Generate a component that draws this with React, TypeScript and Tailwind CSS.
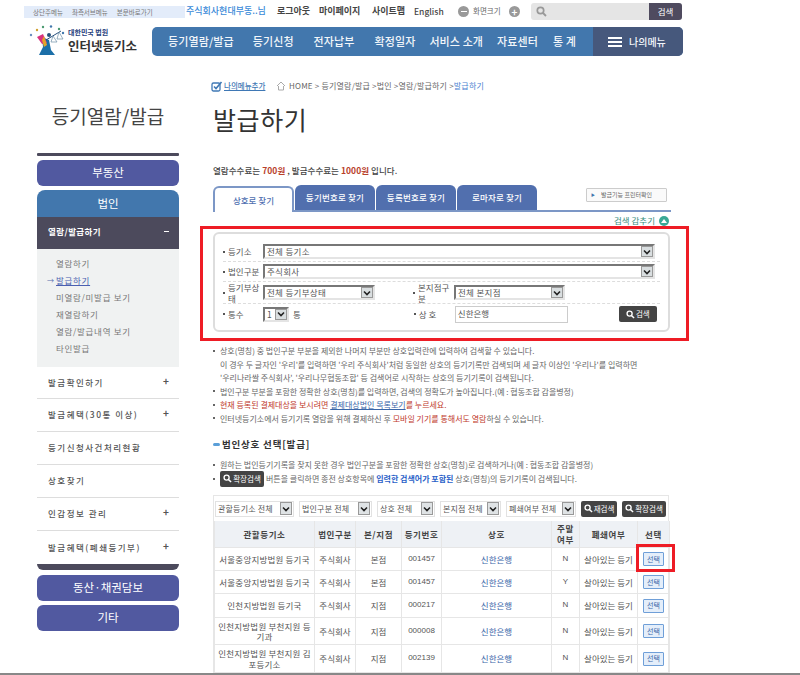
import React from "react";

const font = { fontFamily: '"Noto Sans CJK KR", "Noto Sans", sans-serif' };

function Sel({ text, w, h = "h-[15px]" }: { text: string; w: string; h?: string }) {
  return (
    <div className={`${w} ${h} flex items-center border-2 border-t-[#777] border-l-[#777] border-r-[#e4e4e4] border-b-[#e4e4e4] bg-white shrink-0`}>
      <span className="flex-1 pl-[2px] text-[8.5px] leading-[11px] text-[#555] tracking-[0.3px] whitespace-nowrap">{text}</span>
      <span className="w-[12px] h-full flex items-center justify-center bg-[#d9dee0] border border-[#999] shrink-0">
        <svg width="8" height="6" viewBox="0 0 8 6"><path d="M1 1.5 L4 4.5 L7 1.5" fill="none" stroke="#222" strokeWidth="1.6" /></svg>
      </span>
    </div>
  );
}

function FSel({ text, w }: { text: string; w: string }) {
  return (
    <div className={`${w} h-[16px] flex items-center border border-[#e2e2e2] bg-white shrink-0 pr-[1px]`}>
      <span className="flex-1 pl-[2px] text-[8px] leading-[11px] text-[#555] tracking-[0.2px] whitespace-nowrap">{text}</span>
      <span className="w-[12px] h-[13px] flex items-center justify-center bg-[#dfe3e5] border border-[#999] shrink-0">
        <svg width="8" height="6" viewBox="0 0 8 6"><path d="M1 1.5 L4 4.5 L7 1.5" fill="none" stroke="#222" strokeWidth="1.6" /></svg>
      </span>
    </div>
  );
}

function DarkBtn({ text, w, h = "h-[16px]" }: { text: string; w: string; h?: string }) {
  return (
    <span className={`${w} ${h} flex items-center justify-center gap-[1px] rounded-[2px] bg-[#444] text-white text-[7.5px] leading-none shrink-0`}>
      <svg width="9" height="9" viewBox="0 0 10 10"><circle cx="4" cy="4" r="2.8" fill="none" stroke="#fff" strokeWidth="1.5" /><path d="M6 6 L9 9" stroke="#fff" strokeWidth="1.6" /></svg>
      {text}
    </span>
  );
}

function Logo() {
  return (
    <svg width="44" height="34" viewBox="0 0 44 34" className="shrink-0">
      {[[2, 12, "#6a8fc0"], [8, 7, "#d0a030"], [14, 4, "#4a9a70"], [22, 3.5, "#4277ad"], [30, 6, "#4a9a70"], [34, 10, "#4277ad"]].map((d, i) => (
        <circle key={i} cx={d[0] as number} cy={d[1] as number} r="1.2" fill={d[2] as string} />
      ))}
      <path d="M13 14 L20 17 L22 27 L26 32 L10 32 L14 24 Z" fill="#1b6fa8" />
      <path d="M8 14 L14 11 L18 20 L13 21 Z" fill="#d9327f" />
      <path d="M13 17 L15 13 L18 22 L15 24 Z" fill="#e2a32b" />
      <circle cx="20" cy="12" r="2" fill="#27507d" />
      <path d="M17 17 L32 8" stroke="#27507d" strokeWidth="1" />
      <path d="M24 13 L22 19 L28 19 Z M30 9 L28 16 L34 16 Z" fill="none" stroke="#6f8fa8" strokeWidth="0.7" />
    </svg>
  );
}

function SideRow({ text, plus, h, last }: { text: string; plus?: boolean; h: string; last?: boolean }) {
  return (
    <div className={`${h} flex items-center justify-between pl-[11px] pr-[10px] pb-[1px] ${last ? "" : "border-b border-[#ddd]"}`}>
      <span className="text-[8.5px] font-medium text-[#555] tracking-[1.5px] whitespace-nowrap">{text}</span>
      {plus && <span className="text-[10px] font-bold text-[#555] leading-none -mt-[3px]">+</span>}
    </div>
  );
}

function Note({ children, bullet = true }: { children: React.ReactNode; bullet?: boolean }) {
  return (
    <div className="flex h-[13.5px] items-center text-[8px] leading-[11px] text-[#666] whitespace-nowrap">
      <span className="w-[7px] shrink-0">{bullet && <span className="block w-[2px] h-[2px] bg-[#666]" />}</span>
      <span>{children}</span>
    </div>
  );
}

const rows = [
  ["서울중앙지방법원 등기국", "주식회사", "본점", "001457", "N", "h-[23px]"],
  ["서울중앙지방법원 등기국", "주식회사", "본점", "001457", "Y", "h-[23px]"],
  ["인천지방법원 등기국", "주식회사", "지점", "000217", "N", "h-[24px]"],
  ["인천지방법원 부천지원 등기과", "주식회사", "지점", "000008", "N", "h-[27px]"],
  ["인천지방법원 부천지원 김포등기소", "주식회사", "지점", "002139", "N", "h-[28px]"],
];

export default function App() {
  return (
    <div style={font} className="relative w-[800px] h-[675px] overflow-hidden bg-white">
      {/* utility bar */}
      <div className="flex h-[27px] items-start pl-[24px] pt-[3px]">
        <div className="mt-[3px] flex h-[12px] w-[161px] items-center gap-[9px] bg-[#e3ecfa] pl-[9px] text-[6.5px] leading-none text-[#777]">
          <span>상단주메뉴</span><span>좌측서브메뉴</span><span>본문바로가기</span>
        </div>
        <span className="ml-[1px] mt-[1px] w-[91px] text-[9px] font-medium leading-[14px] text-[#3a8ad8] whitespace-nowrap">주식회사현대부동..님</span>
        <div className="mt-[1px] flex text-[9px] font-bold leading-[14px] text-[#444] whitespace-nowrap">
          <span className="w-[42px]">로그아웃</span>
          <span className="w-[53px]">마이페이지</span>
          <span className="w-[42px]">사이트맵</span>
        </div>
        <span className="mt-[1px] w-[44px] text-[8.5px] font-medium leading-[14px] text-[#444]">English</span>
        <span className="mt-[3px] flex h-[11px] w-[11px] items-center justify-center rounded-full bg-[#999]"><span className="h-[1.5px] w-[6px] bg-white" /></span>
        <span className="ml-[4px] mt-[1px] w-[36px] text-[7.5px] leading-[14px] text-[#666] whitespace-nowrap">화면크기</span>
        <span className="relative mt-[3px] flex h-[11px] w-[11px] items-center justify-center rounded-full bg-[#999] text-[10px] font-bold leading-none text-white">+</span>
        <div className="ml-[11px] flex h-[17px] w-[151px] items-stretch overflow-hidden rounded-[3px] bg-[#e5e5e5]">
          <span className="flex flex-1 items-center pl-[5px]">
            <svg width="11" height="11" viewBox="0 0 11 11"><circle cx="4.5" cy="4.5" r="3.2" fill="none" stroke="#999" strokeWidth="1.7" /><path d="M7 7 L10 10" stroke="#999" strokeWidth="1.8" /></svg>
          </span>
          <span className="flex w-[33px] items-center justify-center bg-[#4f4b5f] text-[8.5px] leading-none text-white">검색</span>
        </div>
      </div>

      {/* logo + nav */}
      <div className="flex h-[29px] pl-[29px]">
        <div className="flex h-[36px] w-[123px] -mt-[5px] items-center">
          <Logo />
          <div className="-ml-[5px] flex flex-col gap-[1px]">
            <span className="text-[7px] font-bold leading-[9px] text-[#27407c] whitespace-nowrap">대한민국 법원</span>
            <span className="text-[12.5px] font-bold leading-[15px] text-[#333] whitespace-nowrap">인터넷등기소</span>
          </div>
        </div>
        <div className="flex h-[29px] w-[531px] overflow-hidden rounded-[5px] bg-[#4277ad] text-[11px] font-medium leading-none text-[#f2f6fa] whitespace-nowrap">
          <div className="flex flex-1 items-center pl-[16px] tracking-[0.1px]">
            <span>등기열람/발급</span>
            <span className="ml-[19px]">등기신청</span>
            <span className="ml-[20px]">전자납부</span>
            <span className="ml-[20px]">확정일자</span>
            <span className="ml-[14px]">서비스 소개</span>
            <span className="ml-[14px]">자료센터</span>
            <span className="ml-[15px]">통 계</span>
          </div>
          <div className="flex w-[90px] items-center gap-[7px] bg-[#46587c] pl-[15px] text-[10px]">
            <span className="flex flex-col gap-[2px]"><i className="block h-[2px] w-[14px] bg-white" /><i className="block h-[2px] w-[14px] bg-white" /><i className="block h-[2px] w-[14px] bg-white" /></span>
            나의메뉴
          </div>
        </div>
      </div>

      {/* body */}
      <div className="flex pl-[37px]">
        {/* sidebar */}
        <aside className="w-[142px] shrink-0 pt-[47px]">
          <h2 className="h-[50px] text-center text-[19px] leading-[26px] font-normal text-[#444] whitespace-nowrap">등기열람/발급</h2>
          <div className="h-[3px] rounded-[1px] bg-[#4c4a5c]" />
          <div className="mt-[4px] flex h-[26px] items-center justify-center rounded-[6px] bg-[#5159a0] text-[11.5px] text-white">부동산</div>
          <div className="mt-[4px] flex h-[27px] items-center justify-center rounded-t-[8px] bg-[#4277ad] text-[11.5px] text-white">법인</div>
          <div className="flex h-[32px] items-center justify-between bg-[#4c4a5c] pb-[3px] pl-[11px] pr-[10px] text-[8.5px] font-bold tracking-[0.4px] text-white">
            <span>열람/발급하기</span><span className="block h-[1.5px] w-[5px] bg-white" />
          </div>
          <div className="flex h-[118px] flex-col bg-[#f0f2f2] pl-[19px] pt-[6px] text-[8.5px] leading-[16.9px] text-[#777] tracking-[0.7px] whitespace-nowrap">
            <span>열람하기</span>
            <span className="relative text-[#4a5fb0] underline"><span className="absolute -left-[9px] top-0 no-underline text-[#5a6fb0] text-[7px]">→</span>발급하기</span>
            <span>미열람/미발급 보기</span>
            <span>재열람하기</span>
            <span>열람/발급내역 보기</span>
            <span>타인발급</span>
          </div>
          <SideRow text="발급확인하기" plus h="h-[32px]" />
          <SideRow text="발급혜택(30통 이상)" plus h="h-[33px]" />
          <SideRow text="등기신청사건처리현황" h="h-[33px]" />
          <SideRow text="상호찾기" h="h-[33px]" />
          <SideRow text="인감정보 관리" plus h="h-[33px]" />
          <SideRow text="발급혜택(폐쇄등기부)" plus h="h-[33px]" last />
          <div className="h-[6px] rounded-b-[6px] bg-[#4c4a5c]" />
          <div className="mt-[5px] flex h-[26px] items-center justify-center rounded-[6px] bg-[#5159a0] text-[11.5px] text-white">동산·채권담보</div>
          <div className="mt-[4px] flex h-[26px] items-center justify-center rounded-[6px] bg-[#5159a0] text-[11.5px] text-white">기타</div>
        </aside>

        {/* main */}
        <main className="ml-[34px] w-[457px] shrink-0">
          <div className="mt-[22px] flex h-[16px] items-center whitespace-nowrap text-[8px] leading-none tracking-[0.2px] text-[#666]">
            <svg width="12" height="11" viewBox="0 0 12 11" className="-ml-[2px]"><rect x="1" y="2" width="8" height="8" rx="1.5" fill="none" stroke="#3f78b5" strokeWidth="1.3" /><path d="M3 5.5 L5 7.5 L10.5 1" fill="none" stroke="#3f78b5" strokeWidth="1.6" /></svg>
            <span className="ml-[1px] w-[52px] text-[7.5px] font-medium tracking-normal text-[#3f78b5] underline">나의메뉴추가</span>
            <svg width="10" height="10" viewBox="0 0 10 10" className="mr-[3px]"><path d="M1 5 L5 1 L9 5 M2.5 5 V9 H7.5 V5" fill="none" stroke="#aaa" strokeWidth="1" /></svg>
            <span>HOME &gt; 등기열람/발급 &gt;법인 &gt;열람/발급하기 &gt;<span className="text-[#4a7fd0]">발급하기</span></span>
          </div>
          <h1 className="mt-[8px] h-[35px] text-[25px] leading-[35px] font-normal tracking-[0.6px] text-[#333]">발급하기</h1>
          <p className="mt-[26px] h-[14px] text-[8.5px] font-medium leading-[14px] tracking-[0.05px] text-[#444] whitespace-nowrap">
            열람수수료는 <span className="font-bold text-[#b8402a]">700원</span> , 발급수수료는 <span className="font-bold text-[#b8402a]">1000원</span> 입니다.
          </p>

          {/* tabs */}
          <div className="mt-[9px] -mr-[1px] flex h-[26px] items-end border-b-2 border-[#7c97c6]">
            <div className="-mb-[2px] flex h-[26px] w-[81px] items-center justify-center rounded-t-[6px] border-2 border-b-0 border-[#7c97c6] bg-white text-[8.5px] font-medium text-[#4f6fb0]">상호로 찾기</div>
            {["등기번호로 찾기", "등록번호로 찾기", "로마자로 찾기"].map((t) => (
              <div key={t} className="ml-[1px] flex h-[25px] w-[80px] items-center justify-center rounded-t-[6px] bg-[#516fae] text-[8.5px] font-medium tracking-[0.2px] text-white">{t}</div>
            ))}
            <div className="ml-[49px] mb-[8px] flex h-[14px] w-[81px] items-center rounded-[1px] border border-[#ccc] bg-[#fafafa] pl-[4px] text-[6px] leading-none text-[#666] whitespace-nowrap">
              <span className="mr-[6px] text-[4px] text-[#4277ad]">▶</span>발급기능 프린터확인
            </div>
          </div>
          <div className="flex h-[17px] items-center justify-end gap-[4px] pr-[1px] text-[8.5px] leading-none text-[#3a8f80]">
            검색 감추기
            <span className="flex h-[10px] w-[10px] items-center justify-center rounded-full bg-[#3aa895]"><svg width="6" height="4" viewBox="0 0 6 4"><path d="M0 4 L3 0 L6 4 Z" fill="#fff" /></svg></span>
          </div>

          {/* search panel */}
          <div className="relative mt-[3px] h-[100px] rounded-[6px] border-2 border-[#ddd] px-[8px] pt-[10px] text-[8.5px] leading-[11px] text-[#555]">
            <div className="flex h-[18px] items-start border-b border-dashed border-[#ddd]">
              <span className="flex w-[40px] items-center pt-[2px]"><i className="mr-[3px] block h-[2px] w-[2px] bg-[#555]" />등기소</span>
              <Sel text="전체 등기소" w="w-[392px]" />
            </div>
            <div className="flex h-[20px] items-center border-b border-dashed border-[#ddd]">
              <span className="flex w-[40px] items-center"><i className="mr-[3px] block h-[2px] w-[2px] bg-[#555]" />법인구분</span>
              <Sel text="주식회사" w="w-[392px]" />
            </div>
            <div className="flex h-[22px] items-center border-b border-dashed border-[#ddd]">
              <span className="flex w-[40px] items-center"><i className="mr-[3px] block h-[2px] w-[2px] shrink-0 bg-[#555]" /><span className="w-[33px] shrink-0 leading-[11px]">등기부상태</span></span>
              <Sel text="전체 등기부상태" w="w-[112px]" />
              <span className="ml-[38px] flex w-[41px] items-center"><i className="mr-[3px] block h-[2px] w-[2px] shrink-0 bg-[#555]" /><span className="w-[33px] shrink-0 leading-[11px]">본지점구분</span></span>
              <Sel text="전체 본지점" w="w-[111px]" />
            </div>
            <div className="flex h-[20px] items-center">
              <span className="flex w-[40px] items-center"><i className="mr-[3px] block h-[2px] w-[2px] bg-[#555]" />통수</span>
              <Sel text="1" w="w-[26px]" />
              <span className="ml-[4px]">통</span>
              <span className="ml-[113px] flex w-[41px] items-center"><i className="mr-[3px] block h-[2px] w-[2px] bg-[#555]" />상 호</span>
              <div className="h-[17px] w-[113px] border border-[#ccc] pl-[2px] pt-[1px] text-[8.5px] text-[#555]">신한은행</div>
              <span className="ml-[51px]"><DarkBtn text="검색" w="w-[38px]" /></span>
            </div>
            <div className="pointer-events-none absolute -left-[15px] -top-[8px] h-[115px] w-[489px] border-[3px] border-[#ee1c25]" />
          </div>

          {/* notes */}
          <div className="mt-[12px]">
            <Note>상호(명칭) 중 법인구분 부분을 제외한 나머지 부분만 상호입력란에 입력하여 검색할 수 있습니다.</Note>
            <Note bullet={false}>이 경우 두 글자인 '우리'를 입력하면 '우리 주식회사'처럼 동일한 상호의 등기기록만 검색되며 세 글자 이상인 '우리나'를 입력하면</Note>
            <Note bullet={false}>'우리나라쌀 주식회사', '우리나무협동조합' 등 검색어로 시작하는 상호의 등기기록이 검색됩니다.</Note>
            <Note>법인구분 부분을 포함한 정확한 상호(명칭)를 입력하면, 검색의 정확도가 높아집니다.(예 : 협동조합 감을병정)</Note>
            <Note><span className="text-[#c0392b]">현재 등록된 결제대상을 보시려면 <span className="text-[#3a66a8] underline">결제대상법인 목록보기</span>를 누르세요.</span></Note>
            <Note>인터넷등기소에서 등기기록 열람을 위해 결제하신 후 <span className="text-[#c0392b]">모바일 기기를 통해서도 열람</span>하실 수 있습니다.</Note>
          </div>

          <div className="mt-[12px] flex h-[14px] items-center gap-[2px] text-[9.5px] font-bold tracking-[0.8px] text-[#333] whitespace-nowrap">
            <span className="h-[3px] w-[7px] rounded-full bg-[#5a9fd8]" />법인상호 선택[발급]
          </div>

          <div className="mt-[7px]">
            <Note>원하는 법인등기기록을 찾지 못한 경우 법인구분을 포함한 정확한 상호(명칭)로 검색하거나(예 : 협동조합 감을병정)</Note>
            <div className="-mt-[1px] flex h-[16px] items-center whitespace-nowrap text-[8px] leading-[11px] text-[#666]">
              <span className="w-[7px] shrink-0"><span className="block h-[2px] w-[2px] bg-[#666]" /></span>
              <DarkBtn text="확장검색" w="w-[44px]" />
              <span className="ml-[2px]">버튼을 클릭하면 종전 상호항목에 <b className="font-bold text-[#2a5fc8]">입력한 검색어가 포함된</b> 상호(명칭)의 등기기록이 검색됩니다.</span>
            </div>
          </div>

          {/* table */}
          <div className="mt-[8px] w-[456px] border border-b-0 border-[#e6e6e6]">
            <div className="flex h-[25px] items-start gap-[5px] pl-[1px] pt-[5px]">
              <FSel text="관할등기소 전체" w="w-[79px]" />
              <FSel text="법인구분 전체" w="w-[73px]" />
              <FSel text="상호 전체" w="w-[58px]" />
              <FSel text="본지점 전체" w="w-[61px]" />
              <FSel text="폐쇄여부 전체" w="w-[70px]" />
              <DarkBtn text="재검색" w="w-[36px]" />
              <DarkBtn text="확장검색" w="w-[44px]" />
            </div>
            <table className="w-[455px] table-fixed border-collapse text-center text-[8.5px] leading-[10.5px] text-[#555]">
              <colgroup>
                <col className="w-[100px]" /><col className="w-[41px]" /><col className="w-[46px]" /><col className="w-[40px]" /><col className="w-[110px]" /><col className="w-[28px]" /><col className="w-[58px]" /><col className="w-[32px]" />
              </colgroup>
              <thead>
                <tr className="h-[27px] bg-[#eef1f5] font-bold text-[#444]">
                  {["관할등기소", "법인구분", "본/지점", "등기번호", "상호", "주말여부", "폐쇄여부", "선택"].map((t, i) => (
                    <th key={t} className={`border border-[#e6e6e6] border-t-0 font-bold tracking-[0.6px] ${i === 5 ? "px-[4px]" : "p-0"}`}>{t}</th>
                  ))}
                </tr>
              </thead>
              <tbody>
                {rows.map((r, i) => (
                  <tr key={i} className={r[5]}>
                    <td className="border border-[#e6e6e6] px-[1px] py-0 tracking-[0.2px]">{r[0]}</td>
                    <td className="border border-[#e6e6e6] p-0">{r[1]}</td>
                    <td className="border border-[#e6e6e6] p-0">{r[2]}</td>
                    <td className="border border-[#e6e6e6] p-0 font-['Liberation_Sans'] text-[8px]">{r[3]}</td>
                    <td className="border border-[#e6e6e6] p-0 text-[#3a66a8]">신한은행</td>
                    <td className="border border-[#e6e6e6] p-0 font-['Liberation_Sans'] text-[8px]">{r[4]}</td>
                    <td className="border border-[#e6e6e6] p-0">살아있는 등기</td>
                    <td className="relative border border-[#e6e6e6] p-0">
                      <span className="mx-auto flex h-[14px] w-[21px] items-center justify-center rounded-[1px] border border-[#6f9fd8] bg-[#e4eefa] text-[7px] leading-none text-[#3a66a8]">선택</span>
                      {i === 0 && <span className="pointer-events-none absolute -left-[2px] -top-[4px] h-[28px] w-[39px] border-[3px] border-[#ee1c25]" />}
                    </td>
                  </tr>
                ))}
              </tbody>
            </table>
          </div>
        </main>
      </div>
      <div className="absolute inset-x-0 bottom-0 h-[2px] bg-[#888]" />
    </div>
  );
}
